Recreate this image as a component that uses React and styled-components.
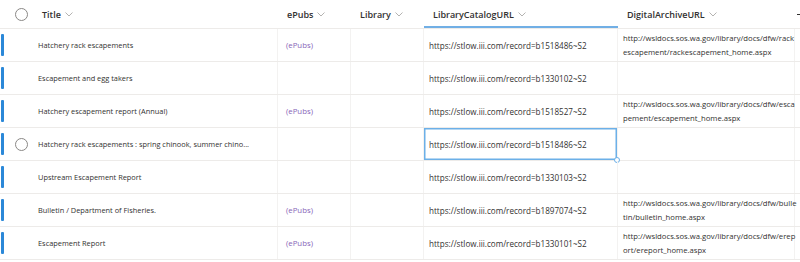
import React from 'react'
import styled, { createGlobalStyle } from 'styled-components'

const GlobalStyle = createGlobalStyle`
  body {
    margin: 0;
    background: #ffffff;
    font-family: "Open Sans", "Noto Sans", sans-serif;
    color: #323130;
  }
`

const columns = '32px 246px 73px 73px 194px 177px 1fr'

const rows = [
    {
        title: 'Hatchery rack escapements',
        epubs: true,
        catalog: 'https://stlow.iii.com/record=b1518486~S2',
        archive: ['http://wsldocs.sos.wa.gov/library/docs/dfw/rack', 'escapement/rackescapement_home.aspx'],
    },
    {
        title: 'Escapement and egg takers',
        catalog: 'https://stlow.iii.com/record=b1330102~S2',
    },
    {
        title: 'Hatchery escapement report (Annual)',
        epubs: true,
        catalog: 'https://stlow.iii.com/record=b1518527~S2',
        archive: ['http://wsldocs.sos.wa.gov/library/docs/dfw/esca', 'pement/escapement_home.aspx'],
    },
    {
        title: 'Hatchery rack escapements : spring chinook, summer chino...',
        catalog: 'https://stlow.iii.com/record=b1518486~S2',
        hover: true,
        selected: true,
    },
    {
        title: 'Upstream Escapement Report',
        catalog: 'https://stlow.iii.com/record=b1330103~S2',
    },
    {
        title: 'Bulletin / Department of Fisheries.',
        epubs: true,
        catalog: 'https://stlow.iii.com/record=b1897074~S2',
        archive: ['http://wsldocs.sos.wa.gov/library/docs/dfw/bulle', 'tin/bulletin_home.aspx'],
    },
    {
        title: 'Escapement Report',
        epubs: true,
        catalog: 'https://stlow.iii.com/record=b1330101~S2',
        archive: ['http://wsldocs.sos.wa.gov/library/docs/dfw/erep', 'ort/ereport_home.aspx'],
    },
]

function Chevron() {
    return (
        <ChevronIcon width="8" height="5" viewBox="0 0 8 5">
            <path d="M0.5 0.5 L4 4 L7.5 0.5" fill="none" stroke="#a19f9d" strokeWidth="0.8" />
        </ChevronIcon>
    )
}

function App() {
    return (
        <>
            <GlobalStyle />
            <Grid>
                <HeaderRow>
                    <CheckCell><Circle /></CheckCell>
                    <HeaderCell>Title <Chevron /></HeaderCell>
                    <HeaderCell>ePubs <Chevron /></HeaderCell>
                    <HeaderCell>Library <Chevron /></HeaderCell>
                    <HeaderCell active>LibraryCatalogURL <Chevron /></HeaderCell>
                    <HeaderCell>DigitalArchiveURL <Chevron /></HeaderCell>
                    <HeaderCell><AddMark /></HeaderCell>
                </HeaderRow>
                {rows.map((row, i) => (
                    <Row key={i}>
                        <CheckCell>
                            <Stripe />
                            {row.hover && <Circle />}
                        </CheckCell>
                        <Cell size={7.4} pad={6}>{row.title}</Cell>
                        <Cell size={7.8}>{row.epubs && <Link>(ePubs)</Link>}</Cell>
                        <Cell />
                        <Cell size={8.1} selected={row.selected}>
                            {row.catalog}
                            {row.selected && <Handle />}
                        </Cell>
                        <Cell size={7.7}>
                            {row.archive && (
                                <Wrapped>
                                    {row.archive[0]}
                                    <br />
                                    {row.archive[1]}
                                </Wrapped>
                            )}
                        </Cell>
                        <Cell last />
                    </Row>
                ))}
            </Grid>
        </>
    )
}

export default App

const Grid = styled.div`
  width: 800px;
  height: 262px;
  overflow: hidden;
`

const HeaderRow = styled.div`
  display: grid;
  grid-template-columns: ${columns};
  height: 28px;
  border-bottom: 1px solid #edebe9;
  white-space: nowrap;
`

const HeaderCell = styled.div`
  display: flex;
  align-items: center;
  gap: 4px;
  padding-left: 9px;
  font-size: 9px;
  font-weight: 600;
  color: #323130;
  box-shadow: ${p => (p.active ? 'inset 0 -2px 0 #71afe5' : 'none')};
  overflow: hidden;
  &:nth-child(2) {
    padding-left: 10px;
  }
`

const ChevronIcon = styled.svg`
  flex: none;
`

const AddMark = styled.span`
  width: 4px;
  height: 1px;
  margin-left: -7px;
  background: #323130;
`

const Row = styled.div`
  display: grid;
  grid-template-columns: ${columns};
  height: 32px;
  border-bottom: 1px solid #edebe9;
`

const CheckCell = styled.div`
  position: relative;
  display: flex;
  align-items: center;
  justify-content: center;
  padding-left: 10px;
`

const Circle = styled.span`
  width: 11px;
  height: 11px;
  border-radius: 50%;
  border: 1px solid #8a8886;
  background: #fff;
`

const Stripe = styled.span`
  position: absolute;
  left: 1px;
  top: 5px;
  bottom: 5px;
  width: 3px;
  border-radius: 1px;
  background: #2b88d8;
`

const Cell = styled.div`
  position: relative;
  display: flex;
  align-items: center;
  padding: 0 5px 0 ${p => p.pad || 5}px;
  font-size: ${p => p.size || 8}px;
  color: #323130;
  white-space: nowrap;
  border-right: ${p => (p.last ? 'none' : '1px solid #f3f2f1')};
  box-shadow: ${p => (p.selected ? 'inset 0 0 0 1.5px #6cb0e8' : 'none')};
`

const Link = styled.span`
  color: #8764b8;
  margin-left: 3px;
`

const Wrapped = styled.div`
  line-height: 14px;
  white-space: nowrap;
`

const Handle = styled.span`
  position: absolute;
  right: -3px;
  bottom: -3px;
  width: 4px;
  height: 4px;
  border-radius: 50%;
  border: 1px solid #6cb0e8;
  background: #fff;
`
